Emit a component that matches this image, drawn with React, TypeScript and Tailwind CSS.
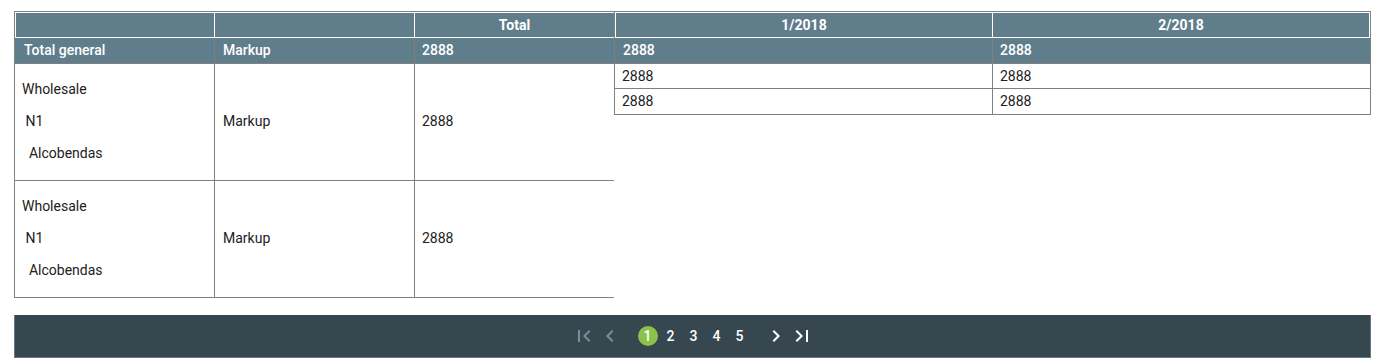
import React from 'react';

const font = { fontFamily: 'Roboto, "Noto Sans", sans-serif' };

const Icon = ({ d, className }: { d: string; className: string }) => (
  <svg viewBox="0 0 24 24" width="24" height="24" className={className} fill="currentColor">
    <path d={d} />
  </svg>
);

const paths = {
  first: 'M18.41 16.59L13.82 12l4.59-4.59L17 6l-6 6 6 6zM6 6h2v12H6z',
  prev: 'M15.41 7.41L14 6l-6 6 6 6 1.41-1.41L10.83 12z',
  next: 'M10 6L8.59 7.41 13.17 12l-4.58 4.59L10 18l6-6z',
  last: 'M5.59 7.41L10.18 12l-4.59 4.59L7 18l6-6-6-6zM16 6h2v12h-2z',
};

function BodyRow() {
  return (
    <div className="flex h-[117px] border-b border-[#808080] text-[#212121]">
      <div className="w-[200px] border-r border-[#808080] pl-[7px] pb-[2px] flex flex-col justify-center gap-[15px] leading-[17px] whitespace-pre">
        <div>Wholesale</div>
        <div> N1</div>
        <div>  Alcobendas</div>
      </div>
      <div className="w-[200px] border-r border-[#808080] pl-[8px] pb-[2px] flex items-center">Markup</div>
      <div className="w-[199px] pl-[7px] pb-[2px] flex items-center">2888</div>
    </div>
  );
}

export default function App() {
  const pages = [1, 2, 3, 4, 5];

  return (
    <div className="bg-white w-[1375px] h-[362px] pt-[11px] pl-[14px] text-[14px]" style={font}>
      <div className="flex items-start">
        {/* left pivot */}
        <div className="w-[600px] border-l border-t border-[#808080]">
          <div className="flex h-[26px] bg-[#607d8b] text-white font-bold border-l border-t border-white">
            <div className="w-[199px] border-r border-b border-white" />
            <div className="w-[200px] border-r border-b border-white" />
            <div className="w-[199px] border-b border-white flex items-center justify-center">Total</div>
          </div>
          <div className="flex h-[26px] bg-[#607d8b] text-white font-medium border-b border-[#808080]">
            <div className="w-[200px] border-r border-[#808080] pl-[9px] flex items-center">Total general</div>
            <div className="w-[200px] border-r border-[#808080] pl-[8px] flex items-center">Markup</div>
            <div className="w-[199px] pl-[7px] flex items-center">2888</div>
          </div>
          <BodyRow />
          <BodyRow />
        </div>

        {/* right pivot */}
        <div className="w-[757px] border border-[#808080]">
          <div className="flex h-[26px] bg-[#607d8b] text-white font-bold border-l border-t border-white">
            <div className="w-[377px] border-r border-b border-white flex items-center justify-center">1/2018</div>
            <div className="flex-1 border-r border-b border-white flex items-center justify-center">2/2018</div>
          </div>
          <div className="flex h-[26px] bg-[#607d8b] text-white font-medium border-b border-[#808080]">
            <div className="w-[378px] border-r border-[#808080] pl-[8px] flex items-center">2888</div>
            <div className="flex-1 pl-[7px] flex items-center">2888</div>
          </div>
          {[0, 1].map((i) => (
            <div key={i} className={`flex h-[25px] text-[#212121] ${i === 0 ? 'border-b border-[#808080]' : ''}`}>
              <div className="w-[378px] border-r border-[#808080] pl-[7px] flex items-center">2888</div>
              <div className="flex-1 pl-[7px] flex items-center">2888</div>
            </div>
          ))}
        </div>
      </div>

      {/* pager */}
      <div className="mt-[17px] w-[1357px] h-[43px] bg-[#37474f] border-l border-r border-b border-[#5f7a86] flex items-center justify-center">
        <div className="flex items-center gap-[2px]">
          <Icon d={paths.first} className="text-[#78909c]" />
          <Icon d={paths.prev} className="text-[#78909c]" />
        </div>
        <div className="flex items-center gap-[3px] ml-[16px] text-[14px] font-medium text-white">
          {pages.map((p) => (
            <div
              key={p}
              className={`w-[20px] h-[20px] rounded-full flex items-center justify-center ${p === 1 ? 'bg-[#8bc34a]' : ''}`}
            >
              {p}
            </div>
          ))}
        </div>
        <div className="flex items-center gap-[2px] ml-[14px] text-white">
          <Icon d={paths.next} className="" />
          <Icon d={paths.last} className="" />
        </div>
      </div>
    </div>
  );
}
